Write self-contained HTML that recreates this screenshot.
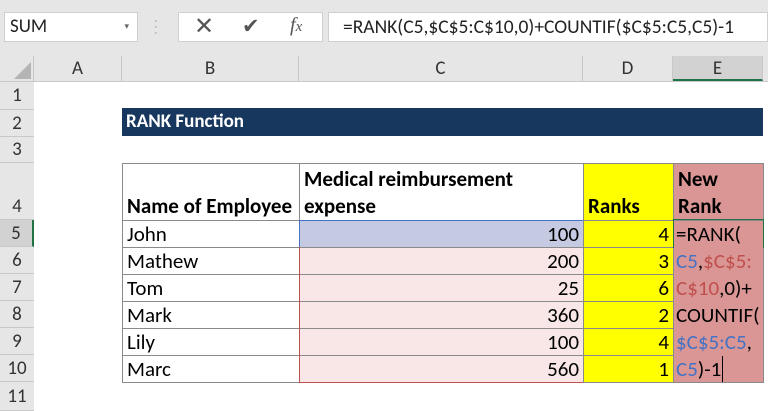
<!DOCTYPE html>
<html><head><style>
*{margin:0;padding:0;box-sizing:border-box}
body{width:768px;height:411px;overflow:hidden;background:#fff;font-family:Calibri,Carlito,"Liberation Sans",sans-serif;position:relative;font-size:21px;color:#000}
.a{position:absolute}
.rh{position:absolute;left:0;width:34px;background:#e6e6e6;border-bottom:1px solid #c8c8c8;color:#333;font-size:19px;text-align:center}
.ch{position:absolute;top:56px;height:25px;background:#e6e6e6;border-right:1px solid #c8c8c8;color:#333;font-size:19px;text-align:center;line-height:25px}
.c{position:absolute;border:1px solid #8a8a8a;padding:0 4px;white-space:nowrap;overflow:hidden}
.b{color:#4472c4}.r{color:#c0504d}
</style></head><body>
<div class="a" style="left:0;top:0;width:768px;height:56px;background:#e6e6e6"></div>
<div class="a" style="left:4px;top:12px;width:134px;height:30px;background:#fff;border:1px solid #d0d0d0;font-size:19px;line-height:28px;padding-left:5px;color:#222">SUM<span style="position:absolute;right:8px;top:0;font-size:9px;color:#666">▾</span></div>
<div class="a" style="left:154px;top:18px;color:#bbb;font-size:14px;line-height:6px">·<br>·<br>·</div>
<div class="a" style="left:178px;top:12px;width:145px;height:30px;background:#fff;border:1px solid #d0d0d0"></div>
<div class="a" style="left:194px;top:12px;font-size:24px;color:#555">✕</div>
<div class="a" style="left:242px;top:13px;font-size:21px;color:#555">✔</div>
<div class="a" style="left:290px;top:14px;font-size:20px;color:#555;font-style:italic;font-family:'Liberation Serif',serif">f<span style="font-size:15px">x</span></div>
<div class="a" style="left:328px;top:12px;width:440px;height:30px;background:#fff;border:1px solid #d0d0d0;line-height:28px;padding-left:14px;font-size:19.5px;color:#222;white-space:nowrap">=RANK(C5,$C$5:C$10,0)+COUNTIF($C$5:C5,C5)-1</div>

<div class="a" style="left:0;top:56px;width:34px;height:25px;background:#e6e6e6;border-right:1px solid #c8c8c8"></div>
<div class="a" style="left:14px;top:62px;width:0;height:0;border-left:17px solid transparent;border-bottom:17px solid #b4b4b4"></div>
<div class="ch" style="left:34px;width:88px">A</div>
<div class="ch" style="left:122px;width:177px">B</div>
<div class="ch" style="left:299px;width:284px">C</div>
<div class="ch" style="left:583px;width:90px">D</div>
<div class="ch" style="left:673px;width:90px;background:#d2d2d2;border-bottom:2px solid #217346">E</div>
<div class="a" style="left:763px;top:56px;width:5px;height:25px;background:#e6e6e6"></div>
<div class="a" style="left:0;top:81px;width:768px;height:1px;background:#c8c8c8"></div>

<div class="rh" style="top:82px;height:28px;line-height:28px">1</div>
<div class="rh" style="top:110px;height:27px;line-height:27px">2</div>
<div class="rh" style="top:137px;height:26px;line-height:26px">3</div>
<div class="rh" style="top:163px;height:57px;line-height:88px">4</div>
<div class="rh" style="top:220px;height:27px;line-height:27px;background:#d2d2d2;border-right:2px solid #217346">5</div>
<div class="rh" style="top:247px;height:27px;line-height:27px">6</div>
<div class="rh" style="top:274px;height:27px;line-height:27px">7</div>
<div class="rh" style="top:301px;height:27px;line-height:27px">8</div>
<div class="rh" style="top:328px;height:27px;line-height:27px">9</div>
<div class="rh" style="top:355px;height:27px;line-height:27px">10</div>
<div class="rh" style="top:382px;height:29px;line-height:29px">11</div>

<div class="a" style="left:122px;top:108px;width:641px;height:28px;background:#17375e;color:#fff;font-weight:bold;font-size:19px;line-height:28px;padding-left:4px">RANK Function</div>

<div class="c" style="left:122px;top:163px;width:178px;height:58px;font-weight:bold;padding-top:29px;line-height:27px">Name of Employee</div>
<div class="c" style="left:299px;top:163px;width:285px;height:58px;font-weight:bold;line-height:27px;padding-top:2px">Medical reimbursement<br>expense</div>
<div class="c" style="left:583px;top:163px;width:91px;height:58px;font-weight:bold;background:#ffff00;padding-top:29px;line-height:27px">Ranks</div>
<div class="c" style="left:673px;top:163px;width:91px;height:58px;font-weight:bold;background:#da9694;line-height:27px;padding-top:2px">New<br>Rank</div>

<div class="c" style="left:122px;top:220px;width:178px;height:28px;line-height:26px">John</div>
<div class="c" style="left:122px;top:247px;width:178px;height:28px;line-height:26px">Mathew</div>
<div class="c" style="left:122px;top:274px;width:178px;height:28px;line-height:26px">Tom</div>
<div class="c" style="left:122px;top:301px;width:178px;height:28px;line-height:26px">Mark</div>
<div class="c" style="left:122px;top:328px;width:178px;height:28px;line-height:26px">Lily</div>
<div class="c" style="left:122px;top:355px;width:178px;height:28px;line-height:26px">Marc</div>

<div class="c" style="left:299px;top:220px;width:285px;height:28px;line-height:26px;text-align:right;background:#c5c9e2;border:1px solid #4472c4">100</div>
<div class="c" style="left:299px;top:247px;width:285px;height:28px;line-height:26px;text-align:right;background:#f9e7e7">200</div>
<div class="c" style="left:299px;top:274px;width:285px;height:28px;line-height:26px;text-align:right;background:#f9e7e7">25</div>
<div class="c" style="left:299px;top:301px;width:285px;height:28px;line-height:26px;text-align:right;background:#f9e7e7">360</div>
<div class="c" style="left:299px;top:328px;width:285px;height:28px;line-height:26px;text-align:right;background:#f9e7e7">100</div>
<div class="c" style="left:299px;top:355px;width:285px;height:28px;line-height:26px;text-align:right;background:#f9e7e7">560</div>
<div class="a" style="left:299px;top:247px;width:285px;height:136px;border:1px solid #c0504d;border-top:none"></div>

<div class="c" style="left:583px;top:220px;width:91px;height:28px;line-height:26px;text-align:right;background:#ffff00">4</div>
<div class="c" style="left:583px;top:247px;width:91px;height:28px;line-height:26px;text-align:right;background:#ffff00">3</div>
<div class="c" style="left:583px;top:274px;width:91px;height:28px;line-height:26px;text-align:right;background:#ffff00">6</div>
<div class="c" style="left:583px;top:301px;width:91px;height:28px;line-height:26px;text-align:right;background:#ffff00">2</div>
<div class="c" style="left:583px;top:328px;width:91px;height:28px;line-height:26px;text-align:right;background:#ffff00">4</div>
<div class="c" style="left:583px;top:355px;width:91px;height:28px;line-height:26px;text-align:right;background:#ffff00">1</div>

<div class="c" style="left:673px;top:220px;width:91px;height:163px;background:#da9694;line-height:27px;white-space:nowrap;padding:0 2px">=RANK(<br><span class="b">C5</span>,<span class="r">$C$5:</span><br><span class="r">C$10</span>,0)+<br>COUNTIF(<br><span class="b">$C$5:C5</span>,<br><span class="b">C5</span>)-1<span style="border-left:1px solid #000;margin-left:1px"></span></div>
<div class="a" style="left:673px;top:219px;width:91px;height:29px;border:1px solid #217346;border-bottom:none"></div>
</body></html>
